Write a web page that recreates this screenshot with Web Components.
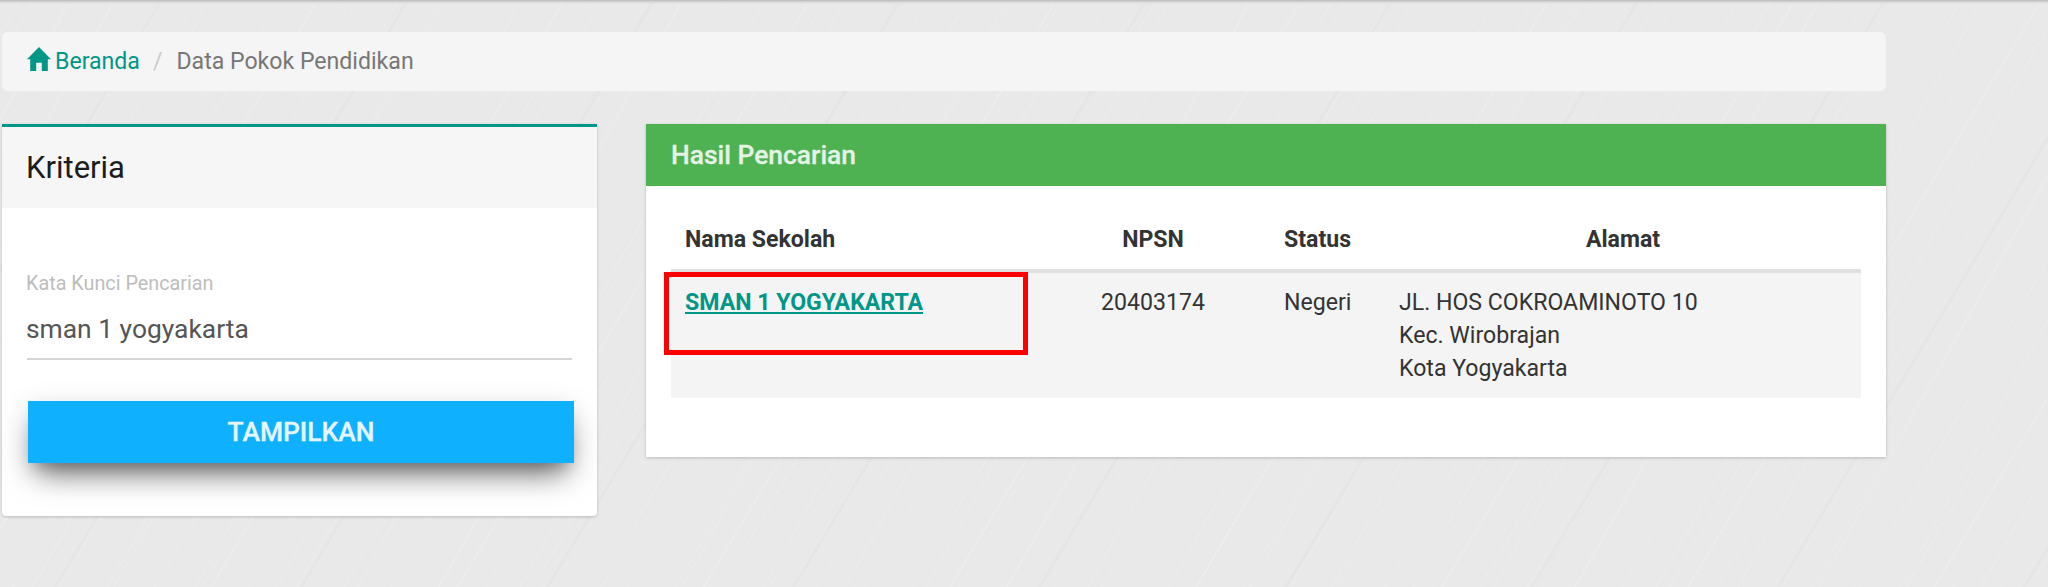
<!DOCTYPE html>
<html lang="id">
<head>
<meta charset="utf-8">
<title>Data Pokok Pendidikan</title>
<style>
  html, body { margin: 0; height: 100%; }
  body {
    height: 587px;
    overflow: hidden;
    box-sizing: border-box;
    padding: 32px 0 0 2px;
    font: 400 23.1px/33px Roboto, sans-serif;
    color: #333;
    background-color: #e9e9e9;
    background-image:
      linear-gradient(to bottom, #b9b9b9 0, #d8d8d8 2px, transparent 4px),
      repeating-linear-gradient(121deg, transparent 0 61px, rgba(255,255,255,.22) 61px 62px, transparent 62px 137px, rgba(0,0,0,.014) 137px 140px, transparent 140px 211px),
      repeating-linear-gradient(120deg, transparent 0 17px, rgba(255,255,255,.12) 17px 18px, transparent 18px 41px),
      repeating-linear-gradient(119deg, transparent 0 29px, rgba(255,255,255,.14) 29px 30px, transparent 30px 71px),
      repeating-linear-gradient(122deg, transparent 0 23px, rgba(0,0,0,.008) 23px 24px, transparent 24px 53px);
  }
</style>
</head>
<body>
  <page-shell>
    <crumb-bar slot="crumbs">
      <crumb-home>Beranda</crumb-home>
      <span slot="current">Data Pokok Pendidikan</span>
    </crumb-bar>
    <criteria-card slot="left" heading="Kriteria" label="Kata Kunci Pencarian" value="sman 1 yogyakarta" action="TAMPILKAN"></criteria-card>
    <result-card slot="right" heading="Hasil Pencarian">
      <result-table></result-table>
    </result-card>
  </page-shell>

<script>
const shellTemplate = document.createElement("template");
shellTemplate.innerHTML = `
  <style>
    :host { display: block; width: 1884px; }
    .crumbs { margin-bottom: 33px; }
    .row { display: flex; align-items: flex-start; gap: 49px; }
    .left { flex: 0 0 595px; }
    .right { flex: 0 0 1240px; }
  </style>
  <div class="crumbs"><slot name="crumbs"></slot></div>
  <div class="row">
    <div class="left"><slot name="left"></slot></div>
    <div class="right"><slot name="right"></slot></div>
  </div>
`;

class PageShell extends HTMLElement {
  constructor() {
    super();
    this.attachShadow({ mode: "open" }).appendChild(shellTemplate.content.cloneNode(true));
  }
}
customElements.define("page-shell", PageShell);

const crumbTemplate = document.createElement("template");
crumbTemplate.innerHTML = `
  <style>
    :host {
      display: flex;
      align-items: center;
      height: 59px;
      padding: 0 0 0 25px;
      box-sizing: border-box;
      background: #f5f5f5;
      border-radius: 6px;
      color: #777;
      font-size: 23.1px;
    }
    .sep { color: #ccc; padding: 0 14px 0 13px; }
  </style>
  <slot></slot>
  <span class="sep">/</span>
  <slot name="current"></slot>
`;

class CrumbBar extends HTMLElement {
  constructor() {
    super();
    this.attachShadow({ mode: "open" }).appendChild(crumbTemplate.content.cloneNode(true));
  }
}
customElements.define("crumb-bar", CrumbBar);

const homeTemplate = document.createElement("template");
homeTemplate.innerHTML = `
  <style>
    :host { display: inline-flex; align-items: center; gap: 4px; color: #009688; }
    svg { width: 24px; height: 24px; display: block; margin-top: -6px; }
  </style>
  <svg viewBox="0 0 24 24" aria-hidden="true"><path fill="currentColor" d="M12 0 24 12.2h-3.2V24h-6v-8.2H9.2V24h-6V12.2H0z"/></svg>
  <slot></slot>
`;

class CrumbHome extends HTMLElement {
  constructor() {
    super();
    this.attachShadow({ mode: "open" }).appendChild(homeTemplate.content.cloneNode(true));
  }
}
customElements.define("crumb-home", CrumbHome);

const criteriaTemplate = document.createElement("template");
criteriaTemplate.innerHTML = `
  <style>
    :host {
      display: block;
      height: 392px;
      box-sizing: border-box;
      background: #fff;
      border-top: 3px solid #009688;
      border-radius: 0 0 4px 4px;
      box-shadow: 0 1px 3px rgba(0,0,0,.2);
    }
    header {
      height: 81px;
      display: flex;
      align-items: center;
      padding-left: 24px;
      background: #f6f6f6;
      color: #1c1c1c;
      font-size: 31px;
    }
    .body { padding: 62px 0 0 24px; }
    label { display: block; color: #bdbdbd; font-size: 19.8px; line-height: 28px; }
    .value {
      width: 545px;
      height: 55px;
      margin: 7px 0 0 1px;
      box-sizing: border-box;
      border-bottom: 2px solid #d4d4d4;
      color: #555;
      font-size: 26.4px;
      line-height: 48px;
      text-indent: -1px;
    }
    button {
      display: block;
      width: 546px;
      height: 62px;
      margin: 41px 0 0 2px;
      border: 0;
      padding: 0;
      background: #0fb1ff;
      color: #e6f6ff;
      font: 500 26.4px Roboto, sans-serif;
      -webkit-text-stroke: .3px;
      box-shadow: 0 20px 30px -10px rgba(0,0,0,.5), 0 7px 30px rgba(0,0,0,.14), 0 10px 14px -6px rgba(0,0,0,.2);
    }
  </style>
  <header></header>
  <div class="body">
    <label></label>
    <div class="value"></div>
    <button type="button"></button>
  </div>
`;

class CriteriaCard extends HTMLElement {
  constructor() {
    super();
    const root = this.attachShadow({ mode: "open" });
    root.appendChild(criteriaTemplate.content.cloneNode(true));
    root.querySelector("header").textContent = this.getAttribute("heading");
    root.querySelector("label").textContent = this.getAttribute("label");
    root.querySelector(".value").textContent = this.getAttribute("value");
    root.querySelector("button").textContent = this.getAttribute("action");
  }
}
customElements.define("criteria-card", CriteriaCard);

const resultTemplate = document.createElement("template");
resultTemplate.innerHTML = `
  <style>
    :host {
      display: block;
      height: 333px;
      background: #fff;
      box-shadow: 0 1px 3px rgba(0,0,0,.2);
    }
    header {
      height: 62px;
      display: flex;
      align-items: center;
      padding-left: 25px;
      background: #4eb152;
      color: #e4f3e5;
      font-size: 26.4px;
      font-weight: 500;
      -webkit-text-stroke: .3px;
    }
    .body { padding: 24px 25px 0 25px; }
  </style>
  <header></header>
  <div class="body"><slot></slot></div>
`;

class ResultCard extends HTMLElement {
  constructor() {
    super();
    const root = this.attachShadow({ mode: "open" });
    root.appendChild(resultTemplate.content.cloneNode(true));
    root.querySelector("header").textContent = this.getAttribute("heading");
  }
}
customElements.define("result-card", ResultCard);

const tableTemplate = document.createElement("template");
tableTemplate.innerHTML = `
  <style>
    :host { display: block; position: relative; color: #333; font-size: 23.1px; line-height: 33px; }
    table { width: 1190px; border-collapse: collapse; table-layout: fixed; }
    th, td { padding: 13px 14px; vertical-align: top; }
    th { font-weight: 700; border-bottom: 4px solid #e0e0e0; }
    tbody tr { background: #f4f4f4; }
    .c { text-align: center; }
    .l { text-align: left; }
    a { color: #009688; font-weight: 700; text-decoration: underline; }
    .mark {
      position: absolute;
      left: -7px;
      top: 62px;
      width: 364px;
      height: 83px;
      box-sizing: border-box;
      border: 5px solid #f00;
    }
  </style>
  <table>
    <colgroup><col style="width:365px"><col style="width:234px"><col style="width:115px"><col></colgroup>
    <thead>
      <tr><th class="l">Nama Sekolah</th><th class="c">NPSN</th><th class="l">Status</th><th class="c">Alamat</th></tr>
    </thead>
    <tbody>
      <tr>
        <td><a href="#">SMAN 1 YOGYAKARTA</a></td>
        <td class="c">20403174</td>
        <td>Negeri</td>
        <td>JL. HOS COKROAMINOTO 10<br>Kec. Wirobrajan<br>Kota Yogyakarta</td>
      </tr>
    </tbody>
  </table>
  <div class="mark"></div>
`;

class ResultTable extends HTMLElement {
  constructor() {
    super();
    this.attachShadow({ mode: "open" }).appendChild(tableTemplate.content.cloneNode(true));
  }
}
customElements.define("result-table", ResultTable);
</script>
</body>
</html>
